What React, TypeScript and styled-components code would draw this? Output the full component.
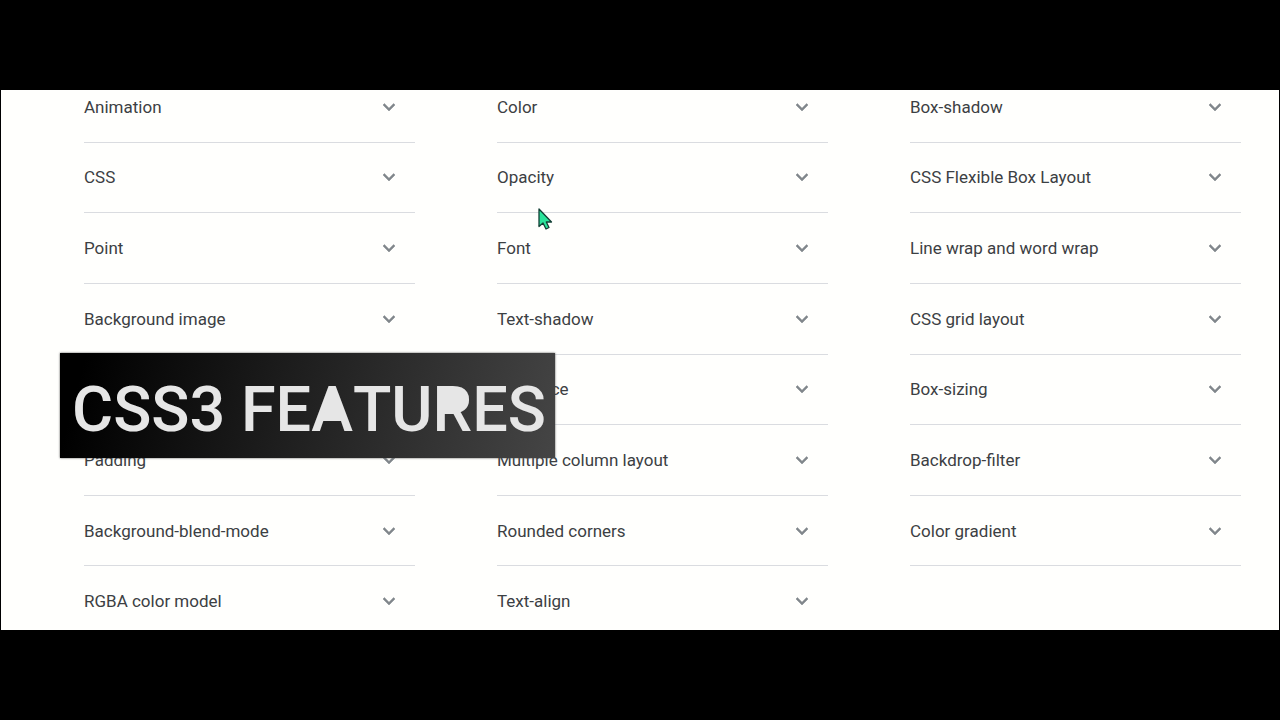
import React from "react";
import styled, { createGlobalStyle } from "styled-components";

const GlobalStyle = createGlobalStyle`
  * { box-sizing: border-box; }
  body { margin: 0; background: #000; }
`;

const Stage = styled.main`
  position: relative;
  display: flex;
  height: 100vh;
  padding: 90px 1px;
  overflow: hidden;
  background: #000;
  font-family: Roboto, "Liberation Sans", sans-serif;
`;

const Panel = styled.section`
  display: flex;
  flex: 1;
  overflow: hidden;
  padding: 0 38px 0 83px;
  background: #fffffd;
`;

const Columns = styled.div`
  display: grid;
  flex: 1;
  grid-template-columns: repeat(3, 1fr);
  column-gap: 82px;
  margin: -18px 0 -7px;
`;

const FeatureList = styled.ul`
  display: grid;
  grid-template-rows: repeat(8, 1fr);
  margin: 0;
  padding: 0;
  list-style: none;
`;

const FeatureItem = styled.li`
  display: flex;
  border-bottom: 1px solid #dadce0;
`;

const FeatureButton = styled.button`
  display: flex;
  flex: 1;
  align-items: center;
  justify-content: space-between;
  padding: 0 14px 0 0;
  border: 0;
  background: none;
  color: #3c4043;
  font-family: inherit;
  font-size: 17px;
  line-height: 24px;
  text-align: left;
  cursor: pointer;
`;

const ChevronIcon = styled.svg`
  width: 24px;
  height: 24px;
  fill: #80868b;
  stroke: #80868b;
  stroke-width: 0.5;
`;

const Banner = styled.div`
  position: absolute;
  top: 353px;
  left: 60px;
  width: 495px;
  height: 105px;
  padding: 28px 0 0 12px;
  background: linear-gradient(105deg, #000 5%, #454545 100%);
  box-shadow: 0 0 2px #555;
`;

const BannerTitle = styled.h1`
  margin: 0;
  color: #e6e6e6;
  font-size: 63px;
  font-weight: 500;
  line-height: 58px;
  white-space: nowrap;
`;

/* Letters of the title whose counters are solid */
const FilledLetter = styled.span<{ $shape: "peak" | "bowl" }>`
  position: relative;

  &::after {
    content: "";
    position: absolute;
    top: ${(p) => (p.$shape === "peak" ? 18 : 17)}px;
    left: ${(p) => (p.$shape === "peak" ? 10 : 8)}px;
    width: ${(p) => (p.$shape === "peak" ? 21 : 24)}px;
    height: ${(p) => (p.$shape === "peak" ? 30 : 21)}px;
    background: #e6e6e6;
    border-radius: ${(p) => (p.$shape === "peak" ? "0" : "0 10px 10px 0")};
    clip-path: ${(p) => (p.$shape === "peak" ? "polygon(50% 0, 100% 100%, 0 100%)" : "none")};
  }
`;

const Pointer = styled.svg`
  position: absolute;
  top: 207px;
  left: 537px;
  width: 18px;
  height: 25px;
`;

const columns: string[][] = [
  ["Animation", "CSS", "Point", "Background image", "", "Padding", "Background-blend-mode", "RGBA color model"],
  ["Color", "Opacity", "Font", "Text-shadow", "Font-face", "Multiple column layout", "Rounded corners", "Text-align"],
  ["Box-shadow", "CSS Flexible Box Layout", "Line wrap and word wrap", "CSS grid layout", "Box-sizing", "Backdrop-filter", "Color gradient"],
];

function Feature({ label }: { label: string }) {
  return (
    <FeatureItem>
      {label && (
        <FeatureButton type="button" aria-expanded={false}>
          {label}
          <ChevronIcon viewBox="0 0 24 24" aria-hidden="true">
            <path d="M7.41 8.59 12 13.17l4.59-4.58L18 10l-6 6-6-6z" />
          </ChevronIcon>
        </FeatureButton>
      )}
    </FeatureItem>
  );
}

export default function App() {
  return (
    <>
      <GlobalStyle />
      <Stage>
        <Panel>
          <Columns>
            {columns.map((labels, column) => (
              <FeatureList key={column}>
                {labels.map((label, row) => (
                  <Feature key={row} label={label} />
                ))}
              </FeatureList>
            ))}
          </Columns>
        </Panel>
        <Banner>
          <BannerTitle>
            CSS3 FE<FilledLetter $shape="peak">A</FilledLetter>TU
            <FilledLetter $shape="bowl">R</FilledLetter>ES
          </BannerTitle>
        </Banner>
        <Pointer viewBox="0 0 18 25" aria-hidden="true">
          <path d="M2 2v17.500l4-3.500 3 6 3-1.500-2.700-5.500h5.200z" fill="#2be39b" stroke="#123f35" strokeWidth="1.300" strokeLinejoin="round" />
        </Pointer>
      </Stage>
    </>
  );
}
